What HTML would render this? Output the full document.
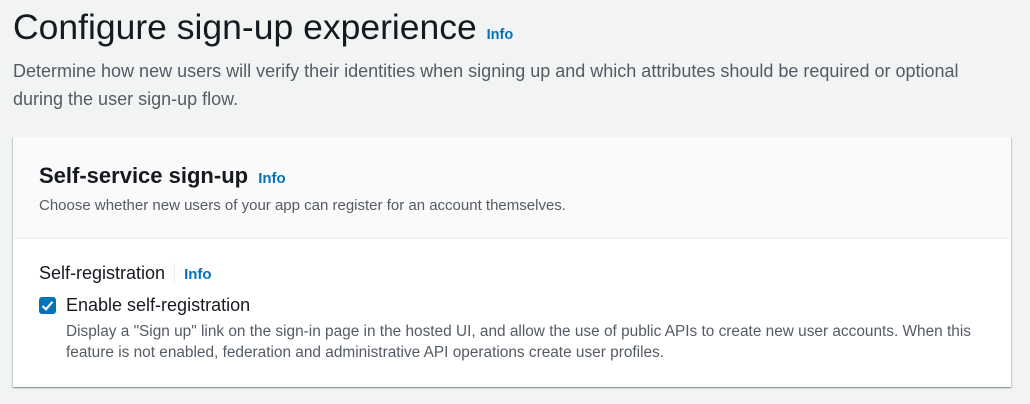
<!DOCTYPE html>
<html><head><style>
body{margin:0;width:1030px;height:404px;background:#f2f3f3;font-family:"Liberation Sans",sans-serif;color:#16191f;overflow:hidden;position:relative}
.a{position:absolute;white-space:nowrap}
.info{color:#0073bb;font-weight:bold}
.card{position:absolute;left:13px;top:137px;width:998px;height:250px;background:#fff;box-shadow:0 1px 1px rgba(0,28,36,.3),1px 1px 1px rgba(0,28,36,.15),-1px 1px 1px rgba(0,28,36,.15)}
.hd{position:absolute;left:0;top:0;width:998px;height:101px;background:#fafafa;border-bottom:1px solid #eaeded}
</style></head><body>
<div class="a" style="left:13px;top:7px;font-size:35.5px;">Configure sign-up experience <span class="info" style="font-size:14.5px">Info</span></div>
<div class="a" style="left:13px;top:57px;font-size:18px;color:#545b64;line-height:28px">Determine how new users will verify their identities when signing up and which attributes should be required or optional<br>during the user sign-up flow.</div>
<div class="card"><div class="hd"></div>
<div class="a" style="left:26px;top:26px;font-size:22px;font-weight:bold">Self-service sign-up <span class="info" style="font-size:15px;margin-left:4px">Info</span></div>
<div class="a" style="left:26px;top:60px;font-size:15px;color:#545b64">Choose whether new users of your app can register for an account themselves.</div>
<div class="a" style="left:26px;top:126px;font-size:18px">Self-registration <span style="display:inline-block;width:1px;height:20px;background:#eaeded;vertical-align:-4px;margin:0 9px 0 4px"></span><span class="info" style="font-size:15px">Info</span></div>
<div class="a" style="left:26px;top:160px;width:17px;height:17px;background:#0073bb;border-radius:3px"><svg width="17" height="17"><path d="M3.5 9l3.5 3.3 6.5-7.5" stroke="#fff" stroke-width="2.2" fill="none"/></svg></div>
<div class="a" style="left:53px;top:158px;font-size:18px">Enable self-registration</div>
<div class="a" style="left:53px;top:184px;font-size:15.4px;color:#545b64;line-height:21px">Display a "Sign up" link on the sign-in page in the hosted UI, and allow the use of public APIs to create new user accounts. When this<br>feature is not enabled, federation and administrative API operations create user profiles.</div>
</div>
</body></html>
